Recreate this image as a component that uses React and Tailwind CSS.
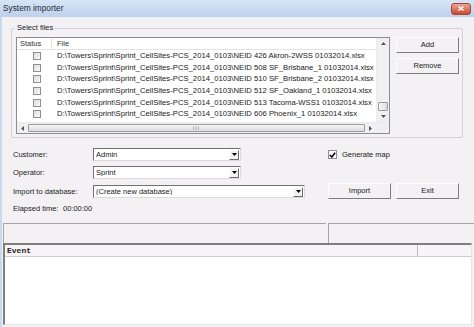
import React from "react";

const PREFIX = "D:\\Towers\\Sprint\\Sprint_CellSites-PCS_2014_0103\\";
const FILES = [
  "NEID 426 Akron-2WSS 01032014.xlsx",
  "NEID 508 SF_Brisbane_1 01032014.xlsx",
  "NEID 510 SF_Brisbane_2 01032014.xlsx",
  "NEID 512 SF_Oakland_1 01032014.xlsx",
  "NEID 513 Tacoma-WSS1 01032014.xlsx",
  "NEID 606 Phoenix_1 01032014.xlsx",
];

function Btn({ children, className }) {
  return (
    <button className={`flex items-center justify-center bg-[#f3f1f4] border border-t-[#fdfdfd] border-l-[#fdfdfd] border-r-[#7d7d7d] border-b-[#7d7d7d] text-[7.5px] text-[#1a1a1a] ${className}`}>
      {children}
    </button>
  );
}

function Arrow({ dir }) {
  const d = {
    up: "M0 3h5L2.5 0z",
    down: "M0 0h5L2.5 3z",
    left: "M3 0v5L0 2.5z",
    right: "M0 0v5L3 2.5z",
  }[dir];
  const w = dir === "up" || dir === "down" ? 5 : 3;
  const h = dir === "up" || dir === "down" ? 3 : 5;
  return (
    <svg width={w} height={h} viewBox={`0 0 ${w} ${h}`}>
      <path d={d} fill="#555" />
    </svg>
  );
}

function Combo({ value, className }) {
  return (
    <div className={`flex items-center h-[13px] bg-white border border-r-[#dcdcdc] border-b-[#dcdcdc] border-t-[#707070] border-l-[#707070] ${className}`}>
      <span className="flex-1 pl-[2px] truncate text-[7.5px] leading-none">{value}</span>
      <span className="w-[10px] h-[10px] mr-[1px] flex items-center justify-center bg-[#f3f1f4] border border-t-white border-l-white border-r-[#6d6d6d] border-b-[#6d6d6d]">
        <svg width="5" height="3" viewBox="0 0 5 3"><path d="M0 0h5L2.5 3z" fill="#000" /></svg>
      </span>
    </div>
  );
}

function FileList() {
  return (
    <div className="flex flex-col w-[374px] h-[97px] bg-white border border-[#8a8d94]">
      <div className="flex h-[84px]">
        <div className="flex flex-col w-[360px]">
          <div className="flex h-[12px] border-b border-[#e3e3e3] text-[7.5px] text-[#333] leading-none">
            <div className="w-[35px] flex items-center pl-[3px] border-r border-[#e3e3e3]">Status</div>
            <div className="flex items-center pl-[5px]">File</div>
          </div>
          {FILES.map((f) => (
            <div key={f} className="flex items-center h-[11.7px]">
              <div className="w-[35px] flex justify-center pl-[4px]">
                <span className="w-[8px] h-[8px] border border-[#8e8f94] bg-gradient-to-br from-[#dcdcdc] to-[#fafafa]" />
              </div>
              <div className="pl-[5px] text-[7.7px] leading-none whitespace-nowrap text-[#1a1a1a]">{PREFIX + f}</div>
            </div>
          ))}
        </div>
        <div className="flex flex-col w-[13px] bg-[#f0eff1] border-l border-[#eaeaea]">
          <div className="h-[11px] flex items-center justify-center"><Arrow dir="up" /></div>
          <div className="flex-1 flex flex-col justify-end px-[1px]">
            <div className="h-[9px] rounded-[1px] border border-[#9c9c9c] bg-gradient-to-r from-[#f6f6f6] to-[#dedede]" />
          </div>
          <div className="h-[11px] flex items-center justify-center"><Arrow dir="down" /></div>
        </div>
      </div>
      <div className="flex h-[11px] border-t border-[#eaeaea]">
        <div className="flex w-[360px] bg-[#f0eff1]">
          <div className="w-[11px] flex items-center justify-center"><Arrow dir="left" /></div>
          <div className="flex-1 py-[1px]">
            <div className="h-full rounded-[1px] border border-[#9c9c9c] bg-gradient-to-b from-[#f6f6f6] to-[#dcdcdc] flex items-center justify-center">
              <span className="text-[5px] leading-none text-[#777] tracking-[1px]">III</span>
            </div>
          </div>
          <div className="w-[11px] flex items-center justify-center"><Arrow dir="right" /></div>
        </div>
        <div className="w-[13px] bg-[#f0eff1]" />
      </div>
    </div>
  );
}

export default function App() {
  return (
    <div className="w-[474px] h-[327px] overflow-hidden bg-[#f3f1f4] font-['Liberation_Sans',Arial,sans-serif] text-[#1a1a1a]">
      <div className="flex items-center h-[17px] pl-[3px] pr-[3px] bg-gradient-to-b from-[#d7e5f6] to-[#bcd1eb]">
        <span className="text-[8.3px] leading-none text-[#1b2a3a]">System importer</span>
        <span className="ml-auto w-[20px] h-[12px] rounded-[3px] border border-[#a04a3c] bg-gradient-to-b from-[#eaa593] to-[#c9472f] flex items-center justify-center">
          <svg width="6" height="5" viewBox="0 0 6 5"><path d="M0.5 0.5l5 4M5.5 0.5l-5 4" stroke="#fff" strokeWidth="1.4" /></svg>
        </span>
      </div>

      <div className="flex flex-col h-[310px] border-l-[2px] border-[#c9daef]">
        <div className="relative mt-[11px] ml-[9px] w-[452px] h-[110px] border border-[#d3d1d5] rounded-[2px] flex pl-[4px] pt-[8px]">
          <span className="absolute -top-[5px] left-[3px] px-[2px] bg-[#f3f1f4] text-[7.5px] leading-none">Select files</span>
          <FileList />
          <div className="flex flex-col ml-[6px] gap-[5px]">
            <Btn className="w-[63px] h-[16px]">Add</Btn>
            <Btn className="w-[63px] h-[16px]">Remove</Btn>
          </div>
        </div>

        <div className="flex">
          <div className="flex flex-col w-[303px] pl-[11px] text-[7.5px]">
            <div className="flex items-center mt-[10px] h-[13px]">
              <span className="w-[80px]">Customer:</span>
              <Combo value="Admin" className="w-[148px]" />
            </div>
            <div className="flex items-center mt-[5px] h-[13px]">
              <span className="w-[80px]">Operator:</span>
              <Combo value="Sprint" className="w-[148px]" />
            </div>
            <div className="flex items-center mt-[6px] h-[13px]">
              <span className="w-[80px]">Import to database:</span>
              <Combo value="(Create new database)" className="w-[212px]" />
            </div>
            <div className="flex items-center mt-[6px] h-[10px]">
              <span className="w-[50px]">Elapsed time:</span>
              <span>00:00:00</span>
            </div>
          </div>
          <div className="flex flex-col ml-[23px]">
            <div className="flex items-center mt-[10px] h-[13px] text-[7.5px]">
              <span className="w-[9px] h-[9px] border border-[#8e8f94] bg-white flex items-center justify-center">
                <svg width="7" height="6" viewBox="0 0 7 6"><path d="M0.8 3l2 2L6.2 0.8" fill="none" stroke="#000" strokeWidth="1.5" /></svg>
              </span>
              <span className="ml-[5px]">Generate map</span>
            </div>
            <div className="flex gap-[5px] mt-[22px]">
              <Btn className="w-[63px] h-[16px]">Import</Btn>
              <Btn className="w-[63px] h-[16px]">Exit</Btn>
            </div>
          </div>
        </div>

        <div className="flex mt-[9px] ml-[1px] h-[20px] gap-[2px]">
          <div className="w-[323px] border-t border-l border-[#a6a4a8] border-r-[#fbfbfb] border-b-0" />
          <div className="flex-1 border-t border-l border-[#a6a4a8] border-b-0" />
        </div>

        <div className="flex flex-col ml-[1px] w-[469px] h-[82px] bg-white border-t-[2px] border-l-[2px] border-[#7f7f7f] border-r border-r-[#e6e6e6] border-b border-b-[#e6e6e6]">
          <div className="flex h-[12px] bg-[#f7f4f8] border-b border-[#cfcdd1]">
            <div className="w-[413px] flex items-center pl-[2px] border-r border-[#bdbbbf] font-['Liberation_Mono',monospace] font-bold text-[8px] leading-none text-[#222]">Event</div>
            <div className="flex-1" />
          </div>
        </div>
      </div>
    </div>
  );
}
